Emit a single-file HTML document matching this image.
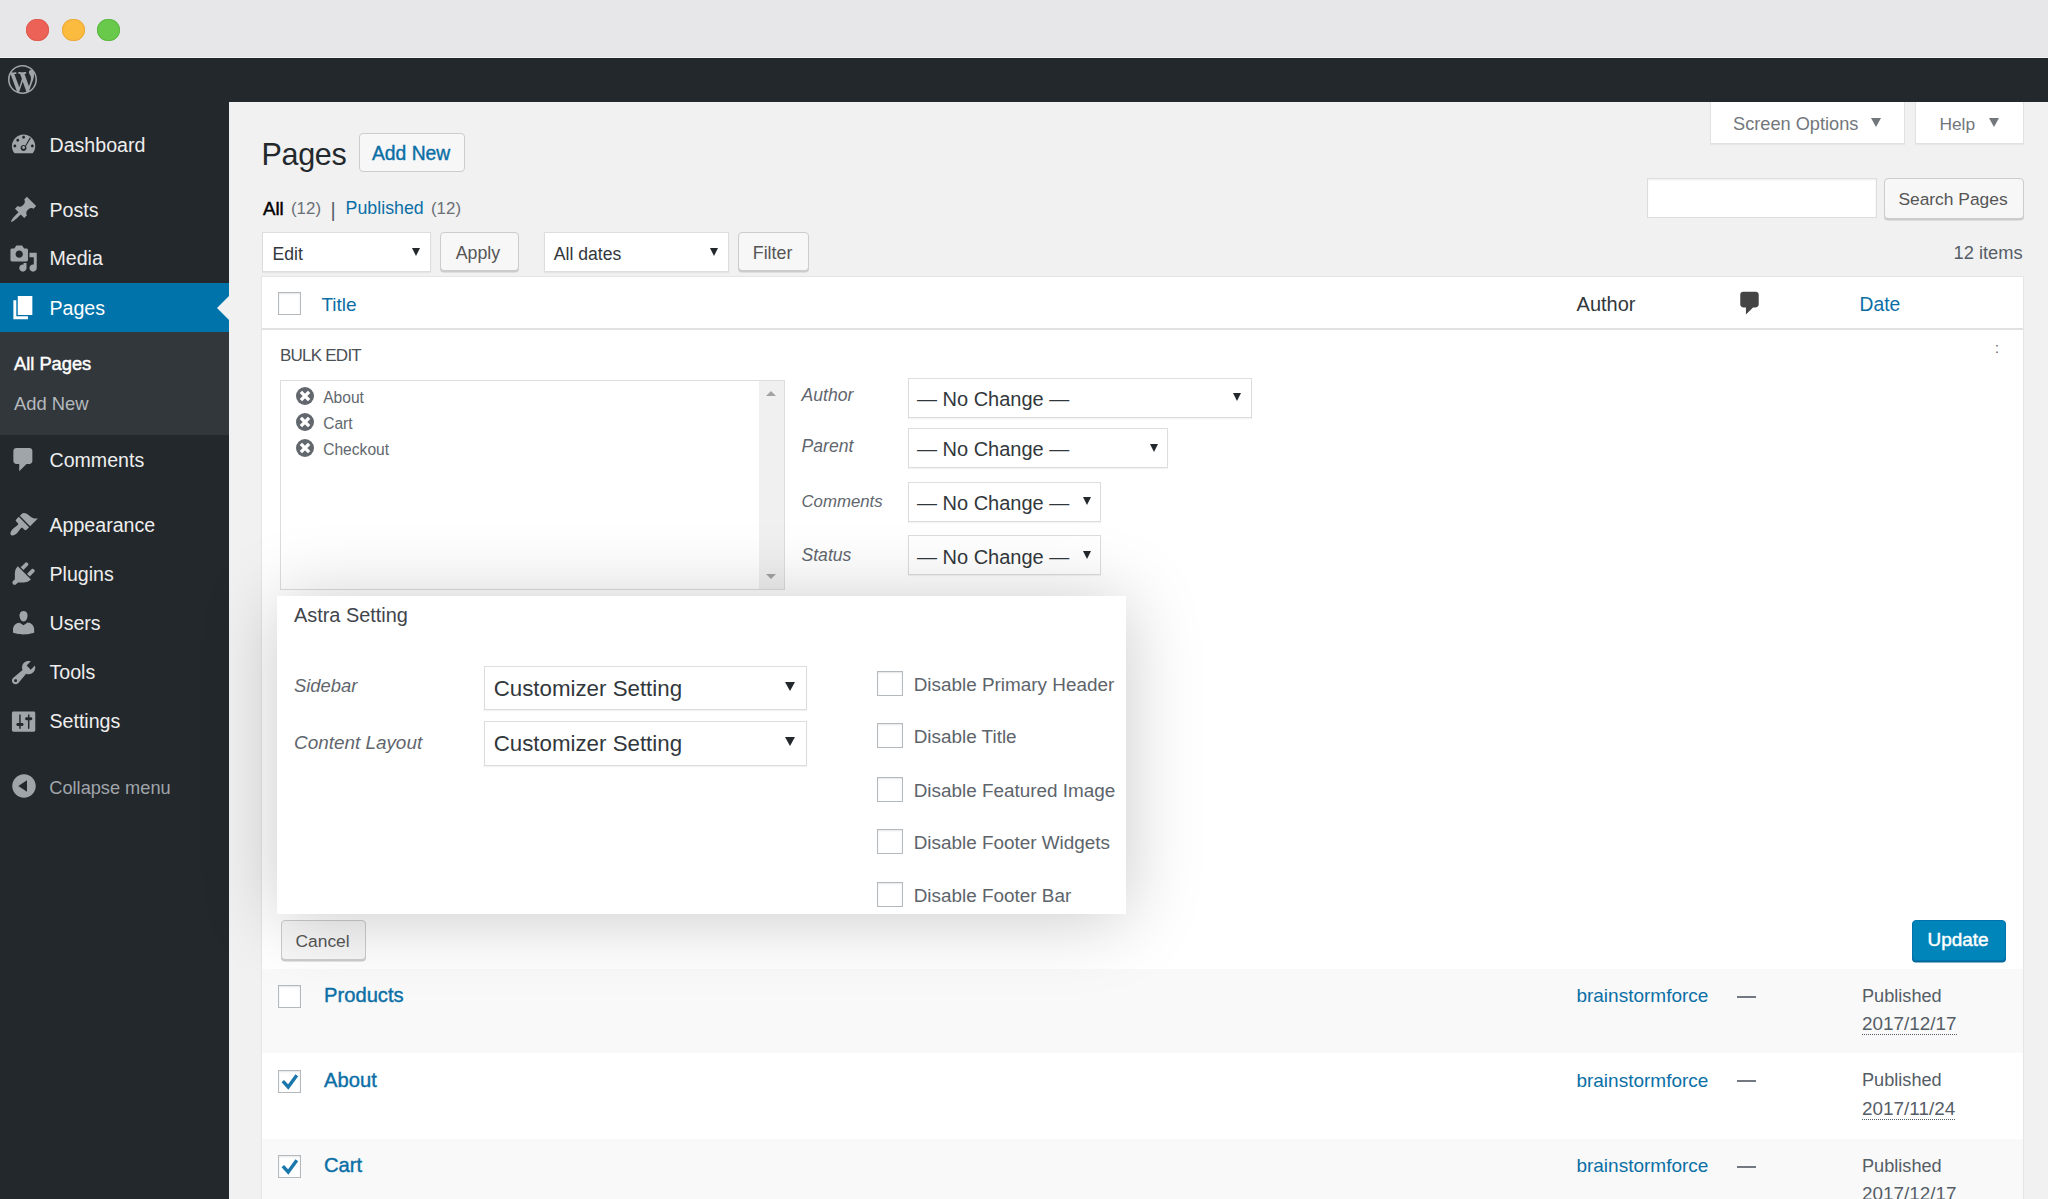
<!DOCTYPE html>
<html><head><meta charset="utf-8"><title>Pages</title>
<style>
html,body{margin:0;padding:0;}
body{width:2048px;height:1199px;position:relative;overflow:hidden;background:#f1f1f1;font-family:"Liberation Sans",sans-serif;}
.r{position:absolute;}
.t{position:absolute;line-height:1;white-space:nowrap;}
</style></head><body>
<div class="r" style="left:0px;top:0px;width:2048px;height:58px;background:#e7e7ea;"></div>
<div class="r" style="left:0px;top:57px;width:2048px;height:1px;background:#f4f4f6;"></div>
<div class="r" style="left:25.8px;top:18.6px;width:23.2px;height:22.6px;border-radius:50%;background:#ec6256;box-shadow:inset 0 0 0 0.8px #dd5a4e;"></div>
<div class="r" style="left:61.6px;top:18.6px;width:23.2px;height:22.6px;border-radius:50%;background:#fbbb3e;box-shadow:inset 0 0 0 0.8px #e9a93a;"></div>
<div class="r" style="left:96.8px;top:18.6px;width:23.2px;height:22.6px;border-radius:50%;background:#68c94a;box-shadow:inset 0 0 0 0.8px #5bb541;"></div>
<div class="r" style="left:0px;top:58px;width:2048px;height:44px;background:#23282d;"></div>
<div class="r" style="left:0px;top:102px;width:229px;height:1097px;background:#23282d;"></div>
<div class="r" style="left:0px;top:283px;width:229px;height:49px;background:#0073aa;"></div>
<div class="r" style="left:217px;top:296px;width:0;height:0;border-top:12px solid transparent;border-bottom:12px solid transparent;border-right:12px solid #f1f1f1;"></div>
<div class="r" style="left:0px;top:332px;width:229px;height:103px;background:#32373c;"></div>
<div class="t" style="left:49.5px;top:135.91px;font-size:19.6px;color:#eeeeee;">Dashboard</div>
<div class="t" style="left:49.5px;top:200.71px;font-size:19.6px;color:#eeeeee;">Posts</div>
<div class="t" style="left:49.5px;top:249.41px;font-size:19.6px;color:#eeeeee;">Media</div>
<div class="t" style="left:49.5px;top:299.31px;font-size:19.6px;color:#ffffff;">Pages</div>
<div class="t" style="left:49.5px;top:450.81px;font-size:19.6px;color:#eeeeee;">Comments</div>
<div class="t" style="left:49.5px;top:516.01px;font-size:19.6px;color:#eeeeee;">Appearance</div>
<div class="t" style="left:49.5px;top:564.81px;font-size:19.6px;color:#eeeeee;">Plugins</div>
<div class="t" style="left:49.5px;top:613.91px;font-size:19.6px;color:#eeeeee;">Users</div>
<div class="t" style="left:49.5px;top:663.11px;font-size:19.6px;color:#eeeeee;">Tools</div>
<div class="t" style="left:49.5px;top:712.11px;font-size:19.6px;color:#eeeeee;">Settings</div>
<div class="t" style="left:49.3px;top:778.59px;font-size:18.2px;color:#a0a5aa;">Collapse menu</div>
<div class="t" style="left:14.0px;top:355.11px;font-size:18.3px;color:#ffffff;-webkit-text-stroke:0.45px #fff;">All Pages</div>
<div class="t" style="left:14.0px;top:395.42px;font-size:18.4px;color:#b4b9be;">Add New</div>
<svg class="r" style="left:9.10px;top:130.30px;" width="29.20" height="29.20" viewBox="0 0 20 20"><path d="M3.76 16h12.48C17.34 14.63 18 12.89 18 11c0-4.42-3.58-8-8-8s-8 3.58-8 8c0 1.89.66 3.63 1.76 5zM10 4c.55 0 1 .45 1 1s-.45 1-1 1-1-.45-1-1 .45-1 1-1zM6 6c.55 0 1 .45 1 1s-.45 1-1 1-1-.45-1-1 .45-1 1-1zm8.22-.91l.78.62-3.4 5.39c.24.35.38.77.38 1.22 0 1.15-.87 2-2 2-1.09 0-2-.91-2-2 0-1.11.91-2 2-2 .46 0 .88.14 1.22.38l3.02-5.61zM4 10c.55 0 1 .45 1 1s-.45 1-1 1-1-.45-1-1 .45-1 1-1zm12 0c.55 0 1 .45 1 1s-.45 1-1 1-1-.45-1-1 .45-1 1-1zm-6 1c-.55 0-1 .45-1 1s.45 1 1 1 1-.45 1-1-.45-1-1-1z" fill="#a0a5aa" fill-rule="nonzero"/></svg>
<svg class="r" style="left:9.10px;top:195.10px;" width="29.20" height="29.20" viewBox="0 0 20 20"><path d="M10.44 3.02l1.82-1.82 6.36 6.35-1.83 1.82c-1.05-.68-2.48-.57-3.41.36l-.75.75c-.92.93-1.04 2.35-.35 3.41l-1.83 1.82-2.41-2.41-2.8 2.79c-.42.42-3.38 2.71-3.8 2.29s1.86-3.39 2.28-3.810l2.79-2.79L4.1 9.36l1.83-1.82c1.05.69 2.48.57 3.4-.36l.75-.75c.93-.92 1.05-2.35.36-3.41z" fill="#a0a5aa" fill-rule="nonzero"/></svg>
<svg class="r" style="left:9.10px;top:243.80px;" width="29.20" height="29.20" viewBox="0 0 20 20"><path d="M13 11V4c0-.55-.45-1-1-1h-1.67L9 1H5L3.67 3H2c-.55 0-1 .45-1 1v7c0 .55.45 1 1 1h10c.55 0 1-.45 1-1zM7 4.5c1.38 0 2.5 1.12 2.5 2.5S8.380 9.5 7 9.5 4.5 8.38 4.5 7 5.62 4.5 7 4.5zM14 6h5v10.5c0 1.38-1.12 2.5-2.5 2.5S14 17.88 14 16.5s1.12-2.5 2.5-2.5c.17 0 .34.02.5.05V9h-3V6zm-4 8.05V13h2v3.5c0 1.38-1.12 2.5-2.5 2.5S7 17.88 7 16.5 8.12 14 9.5 14c.17 0 .34.02.5.05z" fill="#a0a5aa" fill-rule="nonzero"/></svg>
<svg class="r" style="left:9.10px;top:445.20px;" width="29.20" height="29.20" viewBox="0 0 20 20"><path d="M5 2h9c1.1 0 2 .9 2 2v7c0 1.1-.9 2-2 2h-2l-5 5v-5H5c-1.1 0-2-.9-2-2V4c0-1.1.9-2 2-2z" fill="#a0a5aa" fill-rule="nonzero"/></svg>
<svg class="r" style="left:9.10px;top:510.40px;" width="29.20" height="29.20" viewBox="0 0 20 20"><path d="M14.48 11.06L7.41 3.99l1.5-1.5c.5-.56 2.3-.47 3.51.32 1.21.8 1.43 1.28 2.91 2.1 1.18.64 2.45 1.26 4.45.85zm-.71.71L6.7 4.7 4.93 6.47c-.39.39-.39 1.02 0 1.41l1.06 1.06c.39.39.39 1.03 0 1.42-.6.6-1.43 1.11-2.21 1.690-.35.26-.7.53-1.01.84C1.43 14.23.4 16.08 1.4 17.07c.99 1 2.84-.03 4.18-1.36.31-.31.58-.66.85-1.02.57-.78 1.08-1.61 1.69-2.21.39-.39 1.02-.39 1.41 0l1.06 1.06c.39.39 1.02.39 1.41 0z" fill="#a0a5aa" fill-rule="nonzero"/></svg>
<svg class="r" style="left:9.10px;top:559.20px;" width="29.20" height="29.20" viewBox="0 0 20 20"><path d="M13.11 4.36L9.87 7.6 8 5.73l3.24-3.24c.35-.34 1.05-.2 1.56.32.52.51.66 1.21.31 1.55zm-8 1.77l.91-1.12 9.01 9.01-1.19.84c-.71.71-2.63 1.16-3.820 1.16H6.14L4.9 17.26c-.59.59-1.54.59-2.12 0-.59-.58-.59-1.53 0-2.12l1.24-1.24v-3.88c0-1.13.4-3.19 1.09-3.89zm7.26 3.97l3.24-3.24c.34-.35 1.04-.21 1.55.31.52.51.66 1.21.31 1.55l-3.24 3.25z" fill="#a0a5aa" fill-rule="nonzero"/></svg>
<svg class="r" style="left:9.10px;top:608.30px;" width="29.20" height="29.20" viewBox="0 0 20 20"><path d="M10 9.25c-2.27 0-2.73-3.44-2.73-3.44C7 4.02 7.82 2 9.97 2c2.16 0 2.98 2.02 2.71 3.81 0 0-.41 3.44-2.68 3.44zm0 2.57L12.72 10c2.39 0 4.52 2.33 4.52 4.53v2.49s-3.65 1.13-7.24 1.13c-3.65 0-7.24-1.13-7.24-1.13v-2.49c0-2.25 1.94-4.48 4.47-4.480z" fill="#a0a5aa" fill-rule="nonzero"/></svg>
<svg class="r" style="left:9.10px;top:657.50px;" width="29.20" height="29.20" viewBox="0 0 20 20"><path d="M16.68 9.77c-1.34 1.34-3.3 1.67-4.95.99l-5.41 6.52c-.99.99-2.59.99-3.58 0s-.99-2.59 0-3.57l6.52-5.42c-.68-1.650-.35-3.61.99-4.95 1.28-1.28 3.12-1.62 4.72-1.06l-2.89 2.89 2.82 2.82 2.86-2.87c.53 1.58.18 3.39-1.08 4.65zM3.81 16.21c.4.39 1.04.39 1.43 0 .4-.4.4-1.04 0-1.43-.39-.4-1.03-.4-1.43 0-.39.39-.39 1.03 0 1.43z" fill="#a0a5aa" fill-rule="nonzero"/></svg>
<svg class="r" style="left:9.10px;top:706.50px;" width="29.20" height="29.20" viewBox="0 0 20 20"><path d="M18 16V4c0-.55-.45-1-1-1H3c-.55 0-1 .45-1 1v12c0 .55.45 1 1 1h14c.55 0 1-.45 1-1zM8 11h1c.55 0 1 .45 1 1s-.45 1-1 1H8v1.5c0 .28-.22.5-.5.5s-.5-.22-.5-.5V13H6c-.55 0-1-.45-1-1s.45-1 1-1h1V5.5c0-.28.22-.5.5-.5s.5.22.5.5V11zm5-2h-1c-.55 0-1-.45-1-1s.45-1 1-1h1V5.5c0-.28.22-.5.5-.5s.5.22.5.5V7h1c.55 0 1 .45 1 1s-.45 1-1 1h-1v5.5c0 .28-.22.5-.5.5s-.5-.22-.5-.5V9z" fill="#a0a5aa" fill-rule="nonzero"/></svg>
<svg class="r" style="left:9.10px;top:293.40px;" width="29.20" height="29.20" viewBox="0 0 20 20"><path d="M6 15V2h10v13H6zm-1 1h8v2H3V5h2v11z" fill="#ffffff" fill-rule="nonzero"/></svg>
<svg class="r" style="left:9.00px;top:771.00px;" width="30.00" height="30.00" viewBox="0 0 20 20"><path d="M10 2.16c4.33 0 7.84 3.51 7.84 7.84s-3.51 7.84-7.84 7.84S2.16 14.33 2.16 10 5.71 2.16 10 2.16zm2 11.72V6.12L6.18 9.97z" fill="#a0a5aa" fill-rule="nonzero"/></svg>
<svg class="r" style="left:8.00px;top:65.00px;" width="29.00" height="29.00" viewBox="0 0 20 20"><path d="M20 10c0-5.51-4.49-10-10-10C4.48 0 0 4.49 0 10c0 5.52 4.48 10 10 10 5.51 0 10-4.48 10-10zM7.78 15.37L4.37 6.22c.55-.02 1.17-.08 1.17-.08.5-.06.44-1.13-.06-1.11 0 0-1.45.11-2.37.11-.18 0-.37 0-.58-.01C4.12 2.69 6.87 1.11 10 1.11c2.33 0 4.45.87 6.05 2.34-.68-.11-1.65.39-1.65 1.58 0 .74.45 1.36.9 2.1.35.61.55 1.36.55 2.46 0 1.49-1.4 5-1.4 5l-3.03-8.37c.54-.02.82-.17.82-.17.5-.05.44-1.25-.06-1.22 0 0-1.44.12-2.38.12-.87 0-2.33-.12-2.33-.12-.5-.03-.56 1.2-.06 1.22l.92.08 1.26 3.41zM17.41 10c.24-.64.74-1.87.43-4.25.7 1.29 1.05 2.71 1.05 4.25 0 3.29-1.73 6.24-4.4 7.78.97-2.59 1.94-5.2 2.92-7.78zM6.1 18.09C3.12 16.65 1.11 13.53 1.11 10c0-1.3.23-2.48.72-3.59C3.25 10.3 4.67 14.2 6.1 18.09zm4.03-6.63l2.58 6.98c-.86.29-1.76.45-2.71.45-.79 0-1.57-.11-2.29-.33.81-2.38 1.62-4.74 2.42-7.1z" fill="#a0a5aa" fill-rule="nonzero"/></svg>
<div class="r" style="left:229px;top:102px;width:1819px;height:1097px;background:#f1f1f1;"></div>
<div class="r" style="left:1710px;top:102px;width:195px;height:42px;background:#fff;border:1px solid #e1e1e1;border-top:none;box-sizing:border-box;box-shadow:0 1px 1px rgba(0,0,0,.04);"></div>
<div class="r" style="left:1915px;top:102px;width:109px;height:42px;background:#fff;border:1px solid #e1e1e1;border-top:none;box-sizing:border-box;box-shadow:0 1px 1px rgba(0,0,0,.04);"></div>
<div class="t" style="left:1733.0px;top:115.39px;font-size:18.2px;color:#72777c;">Screen Options</div>
<div class="r" style="left:1871px;top:118px;width:0;height:0;border-left:5.5px solid transparent;border-right:5.5px solid transparent;border-top:9px solid #72777c;"></div>
<div class="t" style="left:1939.4px;top:116.07px;font-size:17.4px;color:#72777c;">Help</div>
<div class="r" style="left:1988.5px;top:118px;width:0;height:0;border-left:5.5px solid transparent;border-right:5.5px solid transparent;border-top:9px solid #72777c;"></div>
<div class="t" style="left:261.5px;top:139.08px;font-size:30.5px;color:#23282d;letter-spacing:-0.3px;">Pages</div>
<div class="r" style="left:359px;top:133px;width:106px;height:39px;background:#f7f7f7;border:1.4px solid #ccc;border-radius:4px;box-sizing:border-box;"></div>
<div class="t" style="left:372.0px;top:144.06px;font-size:19.3px;color:#0b6fa6;-webkit-text-stroke:0.4px #0b6fa6;">Add New</div>
<div class="t" style="left:263.0px;top:199.66px;font-size:18.6px;color:#000;-webkit-text-stroke:0.45px #000;">All</div>
<div class="t" style="left:291.0px;top:201.09px;font-size:16.9px;color:#6a7076;">(12)</div>
<div class="t" style="left:330.5px;top:200.07px;font-size:20px;color:#555d66;">|</div>
<div class="t" style="left:345.6px;top:200.33px;font-size:17.8px;color:#0b6fa6;">Published</div>
<div class="t" style="left:431.0px;top:201.09px;font-size:16.9px;color:#6a7076;">(12)</div>
<div class="r" style="left:1647px;top:178px;width:230px;height:40px;background:#fff;border:1.4px solid #ddd;box-sizing:border-box;box-shadow:inset 0 1px 2px rgba(0,0,0,.07);"></div>
<div class="r" style="left:1884px;top:178px;width:140px;height:41px;background:#f7f7f7;border:1.4px solid #ccc;border-radius:4px;box-sizing:border-box;box-shadow:0 1.4px 0 #ccc;"></div>
<div class="t" style="left:1898.4px;top:191.47px;font-size:17.4px;color:#555;">Search Pages</div>
<div class="t" style="left:1953.5px;top:243.81px;font-size:18.3px;color:#555d66;">12 items</div>
<div class="r" style="left:262px;top:232px;width:169px;height:40px;background:#fff;border:1.4px solid #ddd;box-sizing:border-box;box-shadow:0 1px 1px rgba(0,0,0,.05);"></div>
<div class="t" style="left:272.5px;top:245.50px;font-size:17.6px;color:#32373c;">Edit</div>
<div class="r" style="left:412.2px;top:247.5px;width:0;height:0;border-left:4.5px solid transparent;border-right:4.5px solid transparent;border-top:8px solid #23282d;"></div>
<div class="r" style="left:440px;top:232px;width:79px;height:39px;background:#f7f7f7;border:1.4px solid #ccc;border-radius:4px;box-sizing:border-box;box-shadow:0 1.4px 0 #ccc;"></div>
<div class="t" style="left:455.7px;top:245.33px;font-size:17.8px;color:#555;">Apply</div>
<div class="r" style="left:544px;top:232px;width:185px;height:40px;background:#fff;border:1.4px solid #ddd;box-sizing:border-box;box-shadow:0 1px 1px rgba(0,0,0,.05);"></div>
<div class="t" style="left:553.8px;top:245.50px;font-size:17.6px;color:#32373c;">All dates</div>
<div class="r" style="left:710px;top:247.5px;width:0;height:0;border-left:4.5px solid transparent;border-right:4.5px solid transparent;border-top:8px solid #23282d;"></div>
<div class="r" style="left:738px;top:232px;width:71px;height:39px;background:#f7f7f7;border:1.4px solid #ccc;border-radius:4px;box-sizing:border-box;box-shadow:0 1.4px 0 #ccc;"></div>
<div class="t" style="left:752.8px;top:245.33px;font-size:17.8px;color:#555;">Filter</div>
<div class="r" style="left:261px;top:276px;width:1763px;height:923px;background:#fff;border:1.4px solid #e5e5e5;box-sizing:border-box;box-shadow:0 1px 1px rgba(0,0,0,.04);"></div>
<div class="r" style="left:262px;top:328px;width:1761px;height:2px;background:#e1e1e1;"></div>
<div class="r" style="left:278px;top:292px;width:23px;height:23px;background:#fff;border:1.4px solid #b4b9be;box-sizing:border-box;box-shadow:inset 0 1px 2px rgba(0,0,0,.1);"></div>
<div class="t" style="left:321.4px;top:294.92px;font-size:19.0px;color:#0b6fa6;">Title</div>
<div class="t" style="left:1576.6px;top:294.37px;font-size:20.0px;color:#32373c;">Author</div>
<svg class="r" style="left:1735.70px;top:289.10px;" width="28.40" height="28.40" viewBox="0 0 20 20"><path d="M5 2h9c1.1 0 2 .9 2 2v7c0 1.1-.9 2-2 2h-2l-5 5v-5H5c-1.1 0-2-.9-2-2V4c0-1.1.9-2 2-2z" fill="#444" fill-rule="nonzero"/></svg>
<div class="t" style="left:1859.6px;top:294.96px;font-size:19.3px;color:#0b6fa6;">Date</div>
<div class="t" style="left:1995.0px;top:340.65px;font-size:14px;color:#555;">:</div>
<div class="t" style="left:279.9px;top:347.41px;font-size:17.0px;color:#4a5056;letter-spacing:-0.75px;">BULK EDIT</div>
<div class="r" style="left:280px;top:380px;width:505px;height:210px;background:#fff;border:1.4px solid #ddd;box-sizing:border-box;"></div>
<div class="r" style="left:759px;top:381.4px;width:24.600000000000023px;height:207.20000000000005px;background:#f0f0f0;"></div>
<div class="r" style="left:766px;top:391px;width:0;height:0;border-left:5.5px solid transparent;border-right:5.5px solid transparent;border-bottom:5.5px solid #a3a3a3;"></div>
<div class="r" style="left:766px;top:574px;width:0;height:0;border-left:5.5px solid transparent;border-right:5.5px solid transparent;border-top:5.5px solid #a3a3a3;"></div>
<svg class="r" style="left:295.9px;top:386.8px" width="18" height="18" viewBox="0 0 18 18">
<circle cx="9" cy="9" r="9" fill="#62686e"/><path d="M4.9 4.9 L13.1 13.1 M13.1 4.9 L4.9 13.1" stroke="#fff" stroke-width="3.4"/></svg>
<div class="t" style="left:323.2px;top:389.69px;font-size:15.6px;color:#62686e;">About</div>
<svg class="r" style="left:295.9px;top:413.0px" width="18" height="18" viewBox="0 0 18 18">
<circle cx="9" cy="9" r="9" fill="#62686e"/><path d="M4.9 4.9 L13.1 13.1 M13.1 4.9 L4.9 13.1" stroke="#fff" stroke-width="3.4"/></svg>
<div class="t" style="left:323.2px;top:415.89px;font-size:15.6px;color:#62686e;">Cart</div>
<svg class="r" style="left:295.9px;top:439.0px" width="18" height="18" viewBox="0 0 18 18">
<circle cx="9" cy="9" r="9" fill="#62686e"/><path d="M4.9 4.9 L13.1 13.1 M13.1 4.9 L4.9 13.1" stroke="#fff" stroke-width="3.4"/></svg>
<div class="t" style="left:323.2px;top:441.89px;font-size:15.6px;color:#62686e;">Checkout</div>
<div class="t" style="left:801.5px;top:387.10px;font-size:17.6px;color:#5f666d;font-style:italic;">Author</div>
<div class="t" style="left:801.5px;top:438.30px;font-size:17.6px;color:#5f666d;font-style:italic;">Parent</div>
<div class="t" style="left:801.5px;top:493.98px;font-size:16.8px;color:#5f666d;font-style:italic;">Comments</div>
<div class="t" style="left:801.5px;top:547.00px;font-size:17.6px;color:#5f666d;font-style:italic;">Status</div>
<div class="r" style="left:908px;top:377.5px;width:344px;height:40.5px;background:#fff;border:1.4px solid #ddd;box-sizing:border-box;box-shadow:0 1px 1px rgba(0,0,0,.05);"></div>
<div class="t" style="left:917.0px;top:388.77px;font-size:20.0px;color:#32373c;">— No Change —</div>
<div class="r" style="left:1233px;top:393px;width:0;height:0;border-left:4.5px solid transparent;border-right:4.5px solid transparent;border-top:8px solid #23282d;"></div>
<div class="r" style="left:908px;top:428px;width:260px;height:40px;background:#fff;border:1.4px solid #ddd;box-sizing:border-box;box-shadow:0 1px 1px rgba(0,0,0,.05);"></div>
<div class="t" style="left:917.0px;top:439.17px;font-size:20.0px;color:#32373c;">— No Change —</div>
<div class="r" style="left:1150px;top:444px;width:0;height:0;border-left:4.5px solid transparent;border-right:4.5px solid transparent;border-top:8px solid #23282d;"></div>
<div class="r" style="left:908px;top:481.5px;width:193px;height:40.5px;background:#fff;border:1.4px solid #ddd;box-sizing:border-box;box-shadow:0 1px 1px rgba(0,0,0,.05);"></div>
<div class="t" style="left:917.0px;top:493.17px;font-size:20.0px;color:#32373c;">— No Change —</div>
<div class="r" style="left:1083px;top:497px;width:0;height:0;border-left:4.5px solid transparent;border-right:4.5px solid transparent;border-top:8px solid #23282d;"></div>
<div class="r" style="left:908px;top:535px;width:193px;height:40px;background:#fff;border:1.4px solid #ddd;box-sizing:border-box;box-shadow:0 1px 1px rgba(0,0,0,.05);"></div>
<div class="t" style="left:917.0px;top:546.77px;font-size:20.0px;color:#32373c;">— No Change —</div>
<div class="r" style="left:1083px;top:550.5px;width:0;height:0;border-left:4.5px solid transparent;border-right:4.5px solid transparent;border-top:8px solid #23282d;"></div>
<div class="r" style="left:281px;top:919.5px;width:85px;height:40.5px;background:#f7f7f7;border:1.4px solid #ccc;border-radius:4px;box-sizing:border-box;box-shadow:0 1.4px 0 #ccc;"></div>
<div class="t" style="left:295.5px;top:932.67px;font-size:17.4px;color:#555;">Cancel</div>
<div class="r" style="left:1911.5px;top:919.5px;width:94.5px;height:41.5px;background:#0085ba;border:1.4px solid #0073aa;border-radius:4px;box-sizing:border-box;box-shadow:0 1.4px 0 #006799;"></div>
<div class="t" style="left:1927.5px;top:931.10px;font-size:18.9px;color:#fff;-webkit-text-stroke:0.45px #fff;">Update</div>
<div class="r" style="left:262px;top:968.8px;width:1761px;height:84.40000000000009px;background:#f9f9f9;"></div>
<div class="r" style="left:278px;top:985px;width:23px;height:23px;background:#fff;border:1.4px solid #b4b9be;box-sizing:border-box;box-shadow:inset 0 1px 2px rgba(0,0,0,.1);"></div>
<div class="t" style="left:324.0px;top:985.20px;font-size:20.2px;color:#0b6fa6;-webkit-text-stroke:0.4px #0b6fa6;">Products</div>
<div class="t" style="left:1576.4px;top:986.22px;font-size:19.0px;color:#0b6fa6;">brainstormforce</div>
<div class="r" style="left:1737px;top:996px;width:19px;height:2px;background:#737980;"></div>
<div class="t" style="left:1862.0px;top:986.94px;font-size:18.15px;color:#555d66;">Published</div>
<div class="t" style="left:1862.0px;top:1014.30px;font-size:18.9px;color:#555d66;border-bottom:1.6px dotted #555d66;line-height:1.05;">2017/12/17</div>
<div class="r" style="left:262px;top:1053.2px;width:1761px;height:85.29999999999995px;background:#fff;"></div>
<div class="r" style="left:278px;top:1070px;width:23px;height:23px;background:#fff;border:1.4px solid #b4b9be;box-sizing:border-box;box-shadow:inset 0 1px 2px rgba(0,0,0,.1);"></div>
<svg class="r" style="left:278px;top:1070px" width="23" height="23" viewBox="0 0 23 23"><path d="M4.8 11.2 L10.2 17 L18.8 5.2" fill="none" stroke="#1b78ad" stroke-width="3.4" stroke-linejoin="miter"/></svg>
<div class="t" style="left:324.0px;top:1069.60px;font-size:20.2px;color:#0b6fa6;-webkit-text-stroke:0.4px #0b6fa6;">About</div>
<div class="t" style="left:1576.4px;top:1070.62px;font-size:19.0px;color:#0b6fa6;">brainstormforce</div>
<div class="r" style="left:1737px;top:1080px;width:19px;height:2px;background:#737980;"></div>
<div class="t" style="left:1862.0px;top:1071.34px;font-size:18.15px;color:#555d66;">Published</div>
<div class="t" style="left:1862.0px;top:1098.70px;font-size:18.9px;color:#555d66;border-bottom:1.6px dotted #555d66;line-height:1.05;">2017/11/24</div>
<div class="r" style="left:262px;top:1138.5px;width:1761px;height:60.5px;background:#f9f9f9;"></div>
<div class="r" style="left:278px;top:1155px;width:23px;height:23px;background:#fff;border:1.4px solid #b4b9be;box-sizing:border-box;box-shadow:inset 0 1px 2px rgba(0,0,0,.1);"></div>
<svg class="r" style="left:278px;top:1155px" width="23" height="23" viewBox="0 0 23 23"><path d="M4.8 11.2 L10.2 17 L18.8 5.2" fill="none" stroke="#1b78ad" stroke-width="3.4" stroke-linejoin="miter"/></svg>
<div class="t" style="left:324.0px;top:1154.90px;font-size:20.2px;color:#0b6fa6;-webkit-text-stroke:0.4px #0b6fa6;">Cart</div>
<div class="t" style="left:1576.4px;top:1155.92px;font-size:19.0px;color:#0b6fa6;">brainstormforce</div>
<div class="r" style="left:1737px;top:1166px;width:19px;height:2px;background:#737980;"></div>
<div class="t" style="left:1862.0px;top:1156.64px;font-size:18.15px;color:#555d66;">Published</div>
<div class="t" style="left:1862.0px;top:1184.00px;font-size:18.9px;color:#555d66;border-bottom:1.6px dotted #555d66;line-height:1.05;">2017/12/17</div>
<div class="r" style="left:277px;top:596px;width:849px;height:318px;background:#fff;box-shadow:0 4px 70px rgba(0,0,0,.21);z-index:5;"></div>
<div class="t" style="left:294.0px;top:605.85px;font-size:19.9px;color:#3f454b;z-index:6;">Astra Setting</div>
<div class="t" style="left:294.0px;top:676.82px;font-size:18.4px;color:#5f666d;font-style:italic;z-index:6;">Sidebar</div>
<div class="t" style="left:294.0px;top:733.50px;font-size:18.9px;color:#5f666d;font-style:italic;z-index:6;">Content Layout</div>
<div class="r" style="left:483.5px;top:666px;width:323.5px;height:44px;background:#fff;border:1.4px solid #ddd;box-sizing:border-box;box-shadow:0 1px 1px rgba(0,0,0,.05);z-index:6;"></div>
<div class="t" style="left:493.7px;top:678.22px;font-size:22.3px;color:#32373c;z-index:6;">Customizer Setting</div>
<div class="r" style="left:785px;top:681.5px;width:0;height:0;border-left:5px solid transparent;border-right:5px solid transparent;border-top:9px solid #23282d;z-index:6;"></div>
<div class="r" style="left:483.5px;top:721px;width:323.5px;height:44.5px;background:#fff;border:1.4px solid #ddd;box-sizing:border-box;box-shadow:0 1px 1px rgba(0,0,0,.05);z-index:6;"></div>
<div class="t" style="left:493.7px;top:733.42px;font-size:22.3px;color:#32373c;z-index:6;">Customizer Setting</div>
<div class="r" style="left:785px;top:736.5px;width:0;height:0;border-left:5px solid transparent;border-right:5px solid transparent;border-top:9px solid #23282d;z-index:6;"></div>
<div class="r" style="left:877px;top:671px;width:26px;height:25px;background:#fff;border:1.4px solid #b4b9be;box-sizing:border-box;box-shadow:inset 0 1px 2px rgba(0,0,0,.1);z-index:6;"></div>
<div class="t" style="left:913.7px;top:676.00px;font-size:18.9px;color:#5d646b;z-index:6;">Disable Primary Header</div>
<div class="r" style="left:877px;top:723px;width:26px;height:25px;background:#fff;border:1.4px solid #b4b9be;box-sizing:border-box;box-shadow:inset 0 1px 2px rgba(0,0,0,.1);z-index:6;"></div>
<div class="t" style="left:913.7px;top:728.00px;font-size:18.9px;color:#5d646b;z-index:6;">Disable Title</div>
<div class="r" style="left:877px;top:776.5px;width:26px;height:25.0px;background:#fff;border:1.4px solid #b4b9be;box-sizing:border-box;box-shadow:inset 0 1px 2px rgba(0,0,0,.1);z-index:6;"></div>
<div class="t" style="left:913.7px;top:781.50px;font-size:18.9px;color:#5d646b;z-index:6;">Disable Featured Image</div>
<div class="r" style="left:877px;top:828.8px;width:26px;height:25.0px;background:#fff;border:1.4px solid #b4b9be;box-sizing:border-box;box-shadow:inset 0 1px 2px rgba(0,0,0,.1);z-index:6;"></div>
<div class="t" style="left:913.7px;top:833.80px;font-size:18.9px;color:#5d646b;z-index:6;">Disable Footer Widgets</div>
<div class="r" style="left:877px;top:882px;width:26px;height:25px;background:#fff;border:1.4px solid #b4b9be;box-sizing:border-box;box-shadow:inset 0 1px 2px rgba(0,0,0,.1);z-index:6;"></div>
<div class="t" style="left:913.7px;top:887.00px;font-size:18.9px;color:#5d646b;z-index:6;">Disable Footer Bar</div>
</body></html>
